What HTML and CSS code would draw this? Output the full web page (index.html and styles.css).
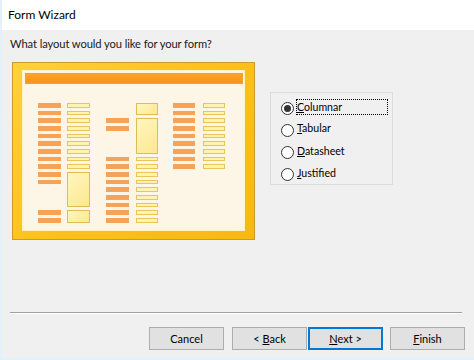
FILE: index.html
```html
<!DOCTYPE html>
<html>
<head>
<meta charset="utf-8">
<link rel="stylesheet" href="styles.css">
</head>
<body>
<div class="window">
  <div class="titlebar">Form Wizard</div>
  <div class="question">What layout would you like for your form?</div>
  <div class="content">
    <div class="frame">
      <div class="sheet">
        <div class="header"></div>
        <div class="cols">
          <div class="col c1">
            <div class="lbl"></div><div class="lbl"></div><div class="lbl"></div><div class="lbl"></div>
            <div class="lbl"></div><div class="lbl"></div><div class="lbl"></div><div class="lbl"></div>
            <div class="lbl"></div><div class="lbl"></div><div class="lbl"></div>
            <div class="s3"></div>
            <div class="lbl"></div><div class="lbl"></div>
          </div>
          <div class="col c2">
            <div class="fld"></div><div class="fld"></div><div class="fld"></div><div class="fld"></div>
            <div class="fld"></div><div class="fld"></div><div class="fld"></div><div class="fld"></div>
            <div class="fld"></div>
            <div class="box s5"></div>
            <div class="box s2"></div>
          </div>
          <div class="col c3">
            <div class="s2"></div>
            <div class="lbl"></div><div class="lbl"></div>
            <div class="s3"></div>
            <div class="lbl"></div><div class="lbl"></div><div class="lbl"></div><div class="lbl"></div>
            <div class="lbl"></div><div class="lbl"></div><div class="lbl"></div><div class="lbl"></div>
            <div class="lbl"></div>
          </div>
          <div class="col c4">
            <div class="box s2"></div>
            <div class="box s5"></div>
            <div class="fld"></div><div class="fld"></div><div class="fld"></div><div class="fld"></div>
            <div class="fld"></div><div class="fld"></div><div class="fld"></div><div class="fld"></div>
            <div class="fld"></div>
          </div>
          <div class="col c5">
            <div class="lbl"></div><div class="lbl"></div><div class="lbl"></div><div class="lbl"></div>
            <div class="lbl"></div><div class="lbl"></div><div class="lbl"></div><div class="lbl"></div>
            <div class="lbl"></div>
          </div>
          <div class="col c6">
            <div class="fld"></div><div class="fld"></div><div class="fld"></div><div class="fld"></div>
            <div class="fld"></div><div class="fld"></div><div class="fld"></div><div class="fld"></div>
            <div class="fld"></div>
          </div>
        </div>
      </div>
    </div>
    <div class="options">
      <div class="opt"><span class="radio checked"></span><span class="label focus"><u>C</u>olumnar</span></div>
      <div class="opt"><span class="radio"></span><span class="label"><u>T</u>abular</span></div>
      <div class="opt"><span class="radio"></span><span class="label"><u>D</u>atasheet</span></div>
      <div class="opt"><span class="radio"></span><span class="label"><u>J</u>ustified</span></div>
    </div>
  </div>
  <div class="footer">
    <div class="sep"></div>
    <div class="buttons">
      <button class="btn">Cancel</button>
      <button class="btn back">&lt; <u>B</u>ack</button>
      <button class="btn next"><u>N</u>ext &gt;</button>
      <button class="btn finish"><u>F</u>inish</button>
    </div>
  </div>
</div>
</body>
</html>
```

FILE: styles.css
```css
* { box-sizing: border-box; }
html, body { margin: 0; padding: 0; }
body {
  width: 474px;
  height: 360px;
  overflow: hidden;
  font-family: Lato, "Noto Sans", sans-serif;
  font-size: 11px;
  color: #000;
  background: #f0f0f0;
}
.window {
  width: 474px;
  height: 360px;
  display: flex;
  flex-direction: column;
  background: #f0f0f0;
  border-left: 2px solid #e3f1fa;
  border-bottom: 2px solid #e3f1fa;
}
.titlebar {
  height: 30px;
  background: #fff;
  padding-left: 6px;
  line-height: 30px;
  font-size: 12px;
  color: #000;
}
.question {
  margin-top: 6px;
  padding-left: 8px;
  line-height: 16px;
  font-size: 11.2px;
  letter-spacing: -0.1px;
  color: #1a1a1a;
}
.content {
  display: flex;
  margin-top: 10px;
  margin-left: 10px;
}
.frame {
  width: 243px;
  height: 178px;
  border: 1px solid #c99a2e;
  padding: 7px 9px 8px 9px;
  background: linear-gradient(135deg, #fdd23a 0%, #fcc219 50%, #f9b80f 100%);
}
.sheet {
  width: 223px;
  height: 161px;
  border: 1px solid #fff2c4;
  background: #fdf6e6;
  padding: 1px 0 0 1px;
}
.header {
  height: 11px;
  margin: 1px 0 0 1px;
  width: 218px;
  background: linear-gradient(180deg, #f9a42a 0%, #f7941d 100%);
  border: 1px solid #f2a03a;
}
.cols {
  display: flex;
  margin-top: 19px;
  margin-left: 14px;
}
.col {
  display: grid;
  grid-template-rows: repeat(16, 4.67px);
  row-gap: 3px;
}
.c1, .c2, .c3 { width: 23px; }
.c4, .c5, .c6 { width: 22px; }
.c2 { margin-left: 6px; }
.c3 { margin-left: 16px; }
.c4 { margin-left: 7px; }
.c5 { margin-left: 15px; }
.c6 { margin-left: 8px; }
.lbl {
  background: #f6a35a;
}
.fld {
  background: #fff3ad;
  border: 1px solid #e8c65a;
}
.box {
  background: linear-gradient(135deg, #fff6c0 0%, #fde890 100%);
  border: 1px solid #dfbd55;
}
.s2 { grid-row: span 2; }
.s3 { grid-row: span 3; }
.s5 { grid-row: span 5; }

.options {
  margin-left: 15px;
  margin-top: 30px;
  width: 123px;
  height: 93px;
  border: 1px solid #dcdcdc;
  padding: 5px 0 0 10px;
}
.opt {
  display: flex;
  align-items: flex-start;
  height: 16px;
  margin-bottom: 6.33px;
}
.radio {
  width: 13px;
  height: 13px;
  margin-top: 3.5px;
  border: 1px solid #333;
  border-radius: 50%;
  background: #fff;
  display: flex;
  align-items: center;
  justify-content: center;
  flex: none;
}
.radio.checked::after {
  content: "";
  width: 7px;
  height: 7px;
  border-radius: 50%;
  background: #333;
}
.label {
  margin-left: 2px;
  height: 16px;
  line-height: 14px;
  font-size: 10.6px;
  border: 1px dotted transparent;
  padding: 0 1px 0 0;
  color: #000;
}
.label.focus {
  width: 92px;
  border-color: #000;
  margin-top: 1px;
}
u { text-decoration: underline; text-underline-offset: 1px; }

.footer {
  margin-top: auto;
}
.sep {
  margin-left: 8px;
  margin-right: 12px;
  height: 2px;
  border-top: 1px solid #a0a0a0;
  border-bottom: 1px solid #ffffff;
}
.buttons {
  display: flex;
  justify-content: flex-end;
  padding-right: 9px;
  margin-top: 13px;
  margin-bottom: 8px;
}
.btn {
  width: 75px;
  height: 23px;
  font-family: inherit;
  font-size: 11px;
  color: #000;
  background: #e1e1e1;
  border: 1px solid #adadad;
  padding: 0;
  line-height: 20px;
}
.back { margin-left: 8px; }
.next { margin-left: 1px; border: 2px solid #0078d7; }
.finish { margin-left: 7px; }
```
